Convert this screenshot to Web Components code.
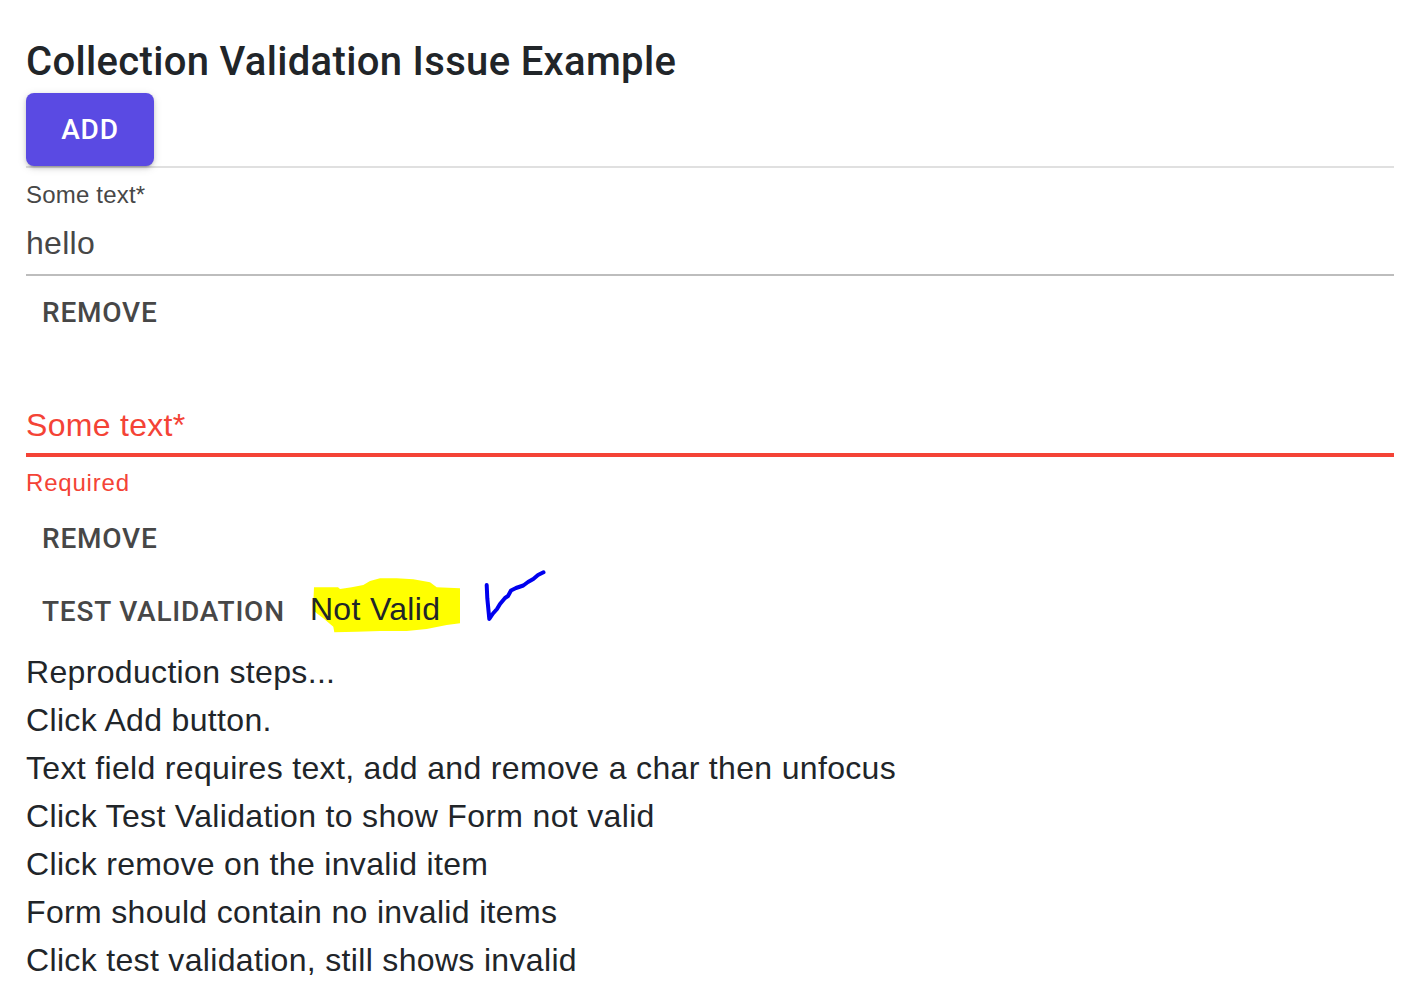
<!DOCTYPE html>
<html>
<head>
<meta charset="utf-8">
<title>Collection Validation Issue Example</title>
<style>
  html, body { margin: 0; background: #fff; }
  body { font-family: "Liberation Sans", sans-serif; color: #212529; }
  main-page { display: block; padding: 29px 22px 0 26px; }
</style>
</head>
<body>
<main-page>
  <page-title>Collection Validation Issue Example</page-title>
  <raised-button>ADD</raised-button>
  <page-divider></page-divider>
  <text-field label="Some text*" value="hello"></text-field>
  <text-button>REMOVE</text-button>
  <text-field label="Some text*" error="Required"></text-field>
  <text-button>REMOVE</text-button>
  <validation-row>
    <text-button>TEST VALIDATION</text-button>
    <span slot="status">Not Valid</span>
  </validation-row>
  <steps-list>
    <div>Reproduction steps...</div>
    <div>Click Add button.</div>
    <div>Text field requires text, add and remove a char then unfocus</div>
    <div>Click Test Validation to show Form not valid</div>
    <div>Click remove on the invalid item</div>
    <div>Form should contain no invalid items</div>
    <div>Click test validation, still shows invalid</div>
  </steps-list>
</main-page>

<script>
class PageTitle extends HTMLElement {
  connectedCallback() {
    this.attachShadow({ mode: 'open' });
    this.shadowRoot.innerHTML = `
      <style>
        :host { display: block; font: 500 40px/62px Roboto, sans-serif; padding-top: 2px; letter-spacing: .33px; color: #212529; }
      </style>
      <slot></slot>`;
  }
}

class RaisedButton extends HTMLElement {
  connectedCallback() {
    this.attachShadow({ mode: 'open' });
    this.shadowRoot.innerHTML = `
      <style>
        :host { display: block; width: max-content; position: relative; z-index: 1; }
        button {
          display: block; width: 128px; height: 73px; padding: 0; border: 0; border-radius: 8px;
          background: #5a4ae3; color: #fff; font: 500 28px Roboto, sans-serif; letter-spacing: .02857em;
          box-shadow: 0 3px 2px -2px rgba(0,0,0,.2), 0 2px 4px 0 rgba(0,0,0,.14), 0 2px 10px 0 rgba(0,0,0,.12);
        }
      </style>
      <button><slot></slot></button>`;
  }
}

class PageDivider extends HTMLElement {
  connectedCallback() {
    this.attachShadow({ mode: 'open' });
    this.shadowRoot.innerHTML = `
      <style>
        :host { display: block; height: 2px; background: #e0e0e0; }
      </style>`;
  }
}

class TextField extends HTMLElement {
  connectedCallback() {
    const label = this.getAttribute('label') || '';
    const value = this.getAttribute('value');
    const error = this.getAttribute('error');
    this.attachShadow({ mode: 'open' });
    this.shadowRoot.innerHTML = `
      <style>
        :host { display: block; font-family: "Liberation Sans", sans-serif; }
        .shrink { font-size: 24px; line-height: 28px; color: #474747; padding-top: 13px; letter-spacing: .2px; }
        .value { font-size: 32px; line-height: 38px; color: #474747; padding: 15px 0 12px; letter-spacing: .3px; border-bottom: 2px solid #bdbdbd; }
        .empty { font-size: 32px; line-height: 38px; color: #f44336; padding: 57px 0 9px; letter-spacing: .3px; border-bottom: 4px solid #f44336; }
        .error { font-size: 24px; line-height: 32px; color: #f44336; letter-spacing: .8px; padding: 10px 0 3px; }
      </style>
      ${value
        ? `<div class="shrink">${label}</div><div class="value">${value}</div>`
        : `<div class="empty">${label}</div><div class="error">${error}</div>`}`;
  }
}

class TextButton extends HTMLElement {
  connectedCallback() {
    this.attachShadow({ mode: 'open' });
    this.shadowRoot.innerHTML = `
      <style>
        :host { display: block; width: max-content; }
        button {
          display: block; height: 73px; padding: 0 16px; border: 0; background: none;
          color: #474747; font: 500 28px Roboto, sans-serif; letter-spacing: .02857em;
        }
      </style>
      <button><slot></slot></button>`;
  }
}

class ValidationRow extends HTMLElement {
  connectedCallback() {
    this.attachShadow({ mode: 'open' });
    this.shadowRoot.innerHTML = `
      <style>
        :host { display: flex; align-items: center; gap: 9px; position: relative; height: 73px; }
        .status { position: relative; font-size: 32px; letter-spacing: .33px; color: #212529; padding-bottom: 4px; }
        svg { position: absolute; left: 244px; top: -15px; pointer-events: none; }
      </style>
      <!-- marker scribbles drawn over the screenshot, coordinates are page px -->
      <svg width="280" height="80" viewBox="270 560 280 80">
        <path fill="#ffff00" d="M314 587.3 L338 587.3 L340 589 L351.7 587.3 L363.3 585 L370 581 L380 578.3 L396.7 578.3 L413.3 579.3 L430 582.3 L436.7 587.3 L460 588.3 L460 623.3 L446.7 625 L426.7 629 L406.7 631 L380 631 L356.7 631.7 L334.3 632.3 L333.3 626.7 L323.3 618.3 L316.7 613.3 L313 610 Z"/>
        <path fill="none" stroke="#0000ee" stroke-width="4" stroke-linecap="round" stroke-linejoin="round" d="M486.7 585 L487.3 598.3 L489.3 619 L493 613.5 L497 609 L500 604 L505 598 L508 596 L511 590.5 L516 588 L523.3 585.5 L528 582 L533.3 579 L538 575 L543.5 572.3"/>
      </svg>
      <slot></slot>
      <div class="status"><slot name="status"></slot></div>`;
  }
}

class StepsList extends HTMLElement {
  connectedCallback() {
    this.attachShadow({ mode: 'open' });
    this.shadowRoot.innerHTML = `
      <style>
        :host { display: block; font-size: 32px; line-height: 48px; letter-spacing: .33px; color: #212529; }
      </style>
      <slot></slot>`;
  }
}

customElements.define('page-title', PageTitle);
customElements.define('raised-button', RaisedButton);
customElements.define('page-divider', PageDivider);
customElements.define('text-field', TextField);
customElements.define('text-button', TextButton);
customElements.define('validation-row', ValidationRow);
customElements.define('steps-list', StepsList);
</script>
</body>
</html>
